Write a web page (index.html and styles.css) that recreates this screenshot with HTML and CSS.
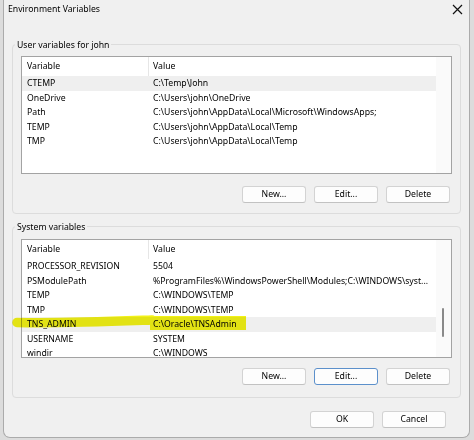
FILE: index.html
```html
<!DOCTYPE html>
<html>
<head>
<meta charset="utf-8">
<link rel="stylesheet" href="styles.css">
</head>
<body>
<div class="window">
  <div class="titlebar">
    <span class="title">Environment Variables</span>
    <span class="spacer"></span>
    <svg class="tb-icon" width="11" height="11" viewBox="0 0 11 11"><path d="M1 1L10 10M10 1L1 10" stroke="#111" stroke-width="1.2" fill="none"/></svg>
  </div>

  <div class="group group-user">
    <div class="legend"><span>User variables for john</span></div>
    <div class="list list-user">
      <div class="rows">
        <div class="row head"><span class="c1">Variable</span><span class="c2">Value</span></div>
        <div class="row sel"><span class="c1">CTEMP</span><span class="c2">C:\Temp\John</span></div>
        <div class="row"><span class="c1">OneDrive</span><span class="c2">C:\Users\john\OneDrive</span></div>
        <div class="row"><span class="c1">Path</span><span class="c2">C:\Users\john\AppData\Local\Microsoft\WindowsApps;</span></div>
        <div class="row"><span class="c1">TEMP</span><span class="c2">C:\Users\john\AppData\Local\Temp</span></div>
        <div class="row"><span class="c1">TMP</span><span class="c2">C:\Users\john\AppData\Local\Temp</span></div>
      </div>
      <div class="track"></div>
    </div>
    <div class="buttons">
      <button class="btn">New...</button>
      <button class="btn">Edit...</button>
      <button class="btn">Delete</button>
    </div>
  </div>

  <div class="group group-sys">
    <div class="legend"><span>System variables</span></div>
    <div class="list list-sys">
      <div class="rows">
        <div class="row head"><span class="c1">Variable</span><span class="c2">Value</span></div>
        <div class="row"><span class="c1">PROCESSOR_REVISION</span><span class="c2">5504</span></div>
        <div class="row"><span class="c1">PSModulePath</span><span class="c2">%ProgramFiles%\WindowsPowerShell\Modules;C:\WINDOWS\syst...</span></div>
        <div class="row"><span class="c1">TEMP</span><span class="c2">C:\WINDOWS\TEMP</span></div>
        <div class="row"><span class="c1">TMP</span><span class="c2">C:\WINDOWS\TEMP</span></div>
        <div class="row sel"><span class="c1">TNS_ADMIN</span><span class="c2">C:\Oracle\TNSAdmin</span></div>
        <div class="row"><span class="c1">USERNAME</span><span class="c2">SYSTEM</span></div>
        <div class="row"><span class="c1">windir</span><span class="c2">C:\WINDOWS</span></div>
      </div>
      <div class="track"><div class="thumb"></div></div>
    </div>
    <div class="buttons">
      <button class="btn">New...</button>
      <button class="btn focus">Edit...</button>
      <button class="btn">Delete</button>
    </div>
  </div>

  <div class="footer">
    <button class="btn">OK</button>
    <button class="btn">Cancel</button>
  </div>
</div>
<svg class="marker" width="240" height="20" viewBox="10 312 240 20">
  <path d="M17 322.5 C60 323.5 110 321.5 152 320" stroke="#f2f215" stroke-width="9.5" stroke-linecap="round" fill="none"/>
  <rect x="150" y="316" width="96" height="14" fill="#f2f215"/>
</svg>
</body>
</html>
```

FILE: styles.css
```css
html, body {
  margin: 0;
  padding: 0;
}
body {
  width: 474px;
  height: 440px;
  position: relative;
  overflow: hidden;
  background: #dcdcdc;
  font-family: "Noto Sans", "Open Sans", sans-serif;
  font-size: 8.7px;
  color: #000;
}
.window {
  margin-left: 3px;
  width: 467px;
  height: 438px;
  box-sizing: border-box;
  border: 1px solid #ababab;
  border-top: none;
  border-radius: 0 0 7px 7px;
  background: #f0f0f0;
  display: flex;
  flex-direction: column;
}
.titlebar {
  height: 30px;
  flex: none;
  display: flex;
  align-items: flex-start;
  padding: 0 6px 0 4px;
}
.title {
  line-height: 18px;
  flex: none;
}
.spacer {
  flex: 1;
}
.tb-icon {
  display: block;
  flex: none;
  width: 11px;
  height: 11px;
  margin-top: 4px;
}
.group {
  flex: none;
  margin: 14px 8px 0;
  border: 1px solid #dcdcdc;
  border-radius: 4px;
  padding: 0 8px 10px;
}
.group-sys {
  margin-top: 12px;
  padding-bottom: 12px;
}
.legend {
  height: 14px;
  line-height: 14px;
  margin: -7.5px 0 0 -6px;
}
.legend span {
  background: #f0f0f0;
  padding: 0 2px;
}
.list {
  box-sizing: border-box;
  border: 1px solid #a3a3a3;
  background: #fff;
  display: flex;
  overflow: hidden;
}
.list-user {
  margin-top: 4.5px;
  height: 118px;
}
.list-sys {
  margin-top: 5.5px;
  height: 119px;
}
.rows {
  flex: 1;
  overflow: hidden;
}
.track {
  width: 15px;
  flex: none;
  background: #fafafa;
}
.thumb {
  width: 2px;
  height: 29px;
  margin: 68px 0 0 6px;
  background: #8a8a8a;
  border-radius: 1px;
}
.row {
  display: flex;
  height: 14.5px;
  line-height: 14.5px;
  white-space: nowrap;
}
.row.head {
  height: 19px;
  line-height: 19px;
}
.row.sel {
  background: #efefef;
}
.c1 {
  width: 127px;
  flex: none;
  box-sizing: border-box;
  padding-left: 5px;
  overflow: hidden;
}
.head .c1 {
  border-right: 1px solid #e6e6e6;
}
.c2 {
  flex: 1;
  padding-left: 4px;
  overflow: hidden;
}
.buttons {
  display: flex;
  justify-content: flex-end;
  gap: 8px;
  padding-right: 2px;
  margin-top: 12px;
}
.group-sys .buttons {
  margin-top: 10px;
}
.btn {
  width: 64px;
  height: 17px;
  box-sizing: border-box;
  margin: 0;
  padding: 0;
  border: 1px solid #d3d3d3;
  border-bottom-color: #c2c2c2;
  border-radius: 3px;
  background: #fdfdfd;
  font: inherit;
  line-height: 15px;
  color: #000;
}
.btn.focus {
  border-color: #5c90cb;
}
.footer {
  display: flex;
  justify-content: flex-end;
  gap: 8px;
  padding-right: 23px;
  margin-top: 13px;
}
.marker {
  position: absolute;
  left: 10px;
  top: 312px;
  pointer-events: none;
  mix-blend-mode: multiply;
}
```
